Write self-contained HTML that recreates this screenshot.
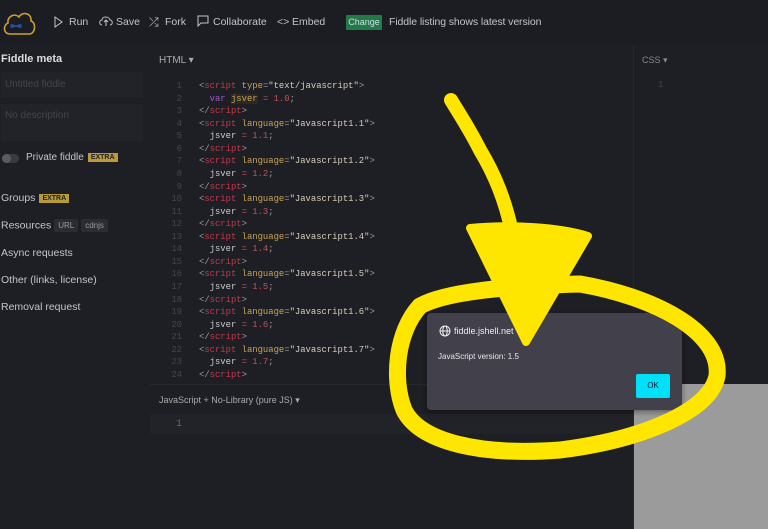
<!DOCTYPE html>
<html><head><style>
*{margin:0;padding:0;box-sizing:border-box}
body{width:768px;height:529px;overflow:hidden;background:#1e1f24;font-family:"Liberation Sans",sans-serif;position:relative;color:#c8c8cc}
.top{position:absolute;left:0;top:0;width:768px;height:45px;background:#1c1d22}
.nav{position:absolute;top:16px;font-size:10.5px;color:#c4c4c8}
.side{position:absolute;left:0;top:45px;width:150px;height:484px;background:#1e1f24}
.ed{position:absolute;left:150px;top:45px;width:483px;height:484px;background:#1e1f24}
.css{position:absolute;left:633px;top:45px;width:135px;height:484px;background:#1e1f24;border-left:1px solid #26272c}
.code{position:absolute;left:150px;top:80px;font-family:"Liberation Mono",monospace;font-size:8.9px;line-height:12.57px;white-space:pre}
.ln{display:inline-block;width:32px;text-align:right;color:#45464d;margin-right:17px}
.b{color:#9a9aa0}.t{color:#c5384a}.a{color:#c9a255}.s{color:#d7cfb6}.n{color:#c2505a}.k{color:#a05ac8}.p{color:#c2505a}.v{color:#c9c9cc}
.badge{display:inline-block;background:#b89a3c;color:#222;font-size:7px;padding:1px 3px;margin-left:4px;vertical-align:middle;font-weight:bold}
.tag{display:inline-block;background:#2c2d33;color:#9a9aa0;font-size:8px;padding:2px 4px;margin-left:3px;vertical-align:middle;border-radius:2px}
.si{position:absolute;left:1px;font-size:10.5px;color:#c4c4c8}
</style></head><body>
<div class="top"></div>
<svg style="position:absolute;left:2px;top:9px" width="34" height="28" viewBox="0 0 34 28"><path d="M8 25 C1 25 1 16 6 14 C5 7 13 4 17 8 C20 2 30 4 29 12 C34 13 34 25 27 25 Z" fill="none" stroke="#c9a227" stroke-width="1.6"/><path d="M12 17 c-4 -4 -4 4 0 0 l4 0 c4 4 4 -4 0 0" fill="none" stroke="#1e5aa8" stroke-width="1.6"/></svg>
<svg style="position:absolute;left:53px;top:16px" width="10" height="12"><path d="M2 1 L9 6 L2 11 Z" fill="none" stroke="#c4c4c8"/></svg>
<div class="nav" style="left:69px">Run</div>
<svg style="position:absolute;left:99px;top:15px" width="14" height="12"><path d="M3 10 C0 10 0 5 3 5 C3 1 10 1 11 5 C14 5 14 10 11 10 M7 11 V5 M5 7 L7 5 L9 7" fill="none" stroke="#c4c4c8"/></svg>
<div class="nav" style="left:116px">Save</div>
<div class="nav" style="left:149px;font-size:12px;top:15px">⤮</div>
<div class="nav" style="left:165px">Fork</div>
<svg style="position:absolute;left:197px;top:15px" width="12" height="12"><path d="M1 1 H11 V8 H4 L1 11 Z" fill="none" stroke="#c4c4c8"/></svg>
<div class="nav" style="left:213px">Collaborate</div>
<div class="nav" style="left:277px">&lt;&gt;</div>
<div class="nav" style="left:292px">Embed</div>
<div style="position:absolute;left:346px;top:15px;width:36px;height:15px;background:#247a46;color:#cde;font-size:9px;text-align:center;line-height:15px;border-radius:1px">Change</div>
<div class="nav" style="left:389px;letter-spacing:-0.1px">Fiddle listing shows latest version</div>

<div class="side"></div>
<div style="position:absolute;left:1px;top:53px;font-size:11px;font-weight:bold;color:#ddd">Fiddle meta</div>
<div style="position:absolute;left:1px;top:72px;width:142px;height:25px;background:#222328;color:#44454c;font-size:10px;padding:7px 4px">Untitled fiddle</div>
<div style="position:absolute;left:1px;top:104px;width:142px;height:37px;background:#222328;color:#44454c;font-size:10px;padding:6px 4px">No description</div>
<div style="position:absolute;left:2px;top:154px;width:17px;height:9px;border-radius:5px;background:#3a3b40"></div>
<div style="position:absolute;left:2px;top:154px;width:9px;height:9px;border-radius:5px;background:#5a5b60"></div>
<div class="si" style="left:26px;top:152px;font-size:10px">Private fiddle<span class="badge">EXTRA</span></div>
<div class="si" style="top:192px">Groups<span class="badge">EXTRA</span></div>
<div class="si" style="top:219px">Resources<span class="tag">URL</span><span class="tag">cdnjs</span></div>
<div class="si" style="top:247px">Async requests</div>
<div class="si" style="top:274px">Other (links, license)</div>
<div class="si" style="top:301px">Removal request</div>

<div class="ed"></div>
<div style="position:absolute;left:159px;top:55px;font-size:10px;color:#aaa">HTML ▾</div>
<div class="code"><span class="ln">1</span><span class="b">&lt;</span><span class="t">script</span> <span class="a">type</span><span class="b">=</span><span class="s">"text/javascript"</span><span class="b">&gt;</span>
<span class="ln">2</span>  <span class="k">var</span> <span class="a" style="background:#2a2a24">jsver</span> <span class="p">=</span> <span class="n">1.0</span><span class="b">;</span>
<span class="ln">3</span><span class="b">&lt;/</span><span class="t">script</span><span class="b">&gt;</span>
<span class="ln">4</span><span class="b">&lt;</span><span class="t">script</span> <span class="a">language</span><span class="b">=</span><span class="s">"Javascript1.1"</span><span class="b">&gt;</span>
<span class="ln">5</span>  <span class="v">jsver</span> <span class="p">=</span> <span class="n">1.1</span><span class="b">;</span>
<span class="ln">6</span><span class="b">&lt;/</span><span class="t">script</span><span class="b">&gt;</span>
<span class="ln">7</span><span class="b">&lt;</span><span class="t">script</span> <span class="a">language</span><span class="b">=</span><span class="s">"Javascript1.2"</span><span class="b">&gt;</span>
<span class="ln">8</span>  <span class="v">jsver</span> <span class="p">=</span> <span class="n">1.2</span><span class="b">;</span>
<span class="ln">9</span><span class="b">&lt;/</span><span class="t">script</span><span class="b">&gt;</span>
<span class="ln">10</span><span class="b">&lt;</span><span class="t">script</span> <span class="a">language</span><span class="b">=</span><span class="s">"Javascript1.3"</span><span class="b">&gt;</span>
<span class="ln">11</span>  <span class="v">jsver</span> <span class="p">=</span> <span class="n">1.3</span><span class="b">;</span>
<span class="ln">12</span><span class="b">&lt;/</span><span class="t">script</span><span class="b">&gt;</span>
<span class="ln">13</span><span class="b">&lt;</span><span class="t">script</span> <span class="a">language</span><span class="b">=</span><span class="s">"Javascript1.4"</span><span class="b">&gt;</span>
<span class="ln">14</span>  <span class="v">jsver</span> <span class="p">=</span> <span class="n">1.4</span><span class="b">;</span>
<span class="ln">15</span><span class="b">&lt;/</span><span class="t">script</span><span class="b">&gt;</span>
<span class="ln">16</span><span class="b">&lt;</span><span class="t">script</span> <span class="a">language</span><span class="b">=</span><span class="s">"Javascript1.5"</span><span class="b">&gt;</span>
<span class="ln">17</span>  <span class="v">jsver</span> <span class="p">=</span> <span class="n">1.5</span><span class="b">;</span>
<span class="ln">18</span><span class="b">&lt;/</span><span class="t">script</span><span class="b">&gt;</span>
<span class="ln">19</span><span class="b">&lt;</span><span class="t">script</span> <span class="a">language</span><span class="b">=</span><span class="s">"Javascript1.6"</span><span class="b">&gt;</span>
<span class="ln">20</span>  <span class="v">jsver</span> <span class="p">=</span> <span class="n">1.6</span><span class="b">;</span>
<span class="ln">21</span><span class="b">&lt;/</span><span class="t">script</span><span class="b">&gt;</span>
<span class="ln">22</span><span class="b">&lt;</span><span class="t">script</span> <span class="a">language</span><span class="b">=</span><span class="s">"Javascript1.7"</span><span class="b">&gt;</span>
<span class="ln">23</span>  <span class="v">jsver</span> <span class="p">=</span> <span class="n">1.7</span><span class="b">;</span>
<span class="ln">24</span><span class="b">&lt;/</span><span class="t">script</span><span class="b">&gt;</span></div>
<div style="position:absolute;left:150px;top:384px;width:483px;height:145px;background:#1e1f24;border-top:1px solid #26272c"></div>
<div style="position:absolute;left:159px;top:395px;font-size:9px;color:#aaa">JavaScript + No-Library (pure JS) ▾</div>
<div style="position:absolute;left:150px;top:414px;width:483px;height:20px;background:#222328"></div>
<div style="position:absolute;left:176px;top:419px;font-family:'Liberation Mono',monospace;font-size:10px;color:#666">1</div>

<div class="css"></div>
<div style="position:absolute;left:642px;top:55px;font-size:9px;color:#888">CSS ▾</div>
<div style="position:absolute;left:658px;top:80px;font-family:'Liberation Mono',monospace;font-size:9px;color:#45464d">1</div>
<div style="position:absolute;left:634px;top:384px;width:134px;height:145px;background:#9b9b9b"></div>

<div style="position:absolute;left:427px;top:313px;width:255px;height:97px;background:#42404b;border-radius:4px;box-shadow:0 2px 6px rgba(0,0,0,.4)"></div>
<svg style="position:absolute;left:439px;top:325px" width="12" height="12" viewBox="0 0 12 12"><circle cx="6" cy="6" r="5" fill="none" stroke="#eee"/><ellipse cx="6" cy="6" rx="2.2" ry="5" fill="none" stroke="#eee"/><path d="M1 6H11" stroke="#eee"/></svg>
<div style="position:absolute;left:454px;top:326px;font-size:9px;color:#eee">fiddle.jshell.net</div>
<div style="position:absolute;left:438px;top:352px;font-size:8px;color:#e6e6e6">JavaScript version: 1.5</div>
<div style="position:absolute;left:636px;top:374px;width:34px;height:24px;background:#00e0f8;border-radius:2px;color:#113;font-size:8px;text-align:center;line-height:24px">OK</div>

<svg style="position:absolute;left:0;top:0" width="768" height="529">
<g fill="none" stroke="#ffe600" stroke-linecap="round" stroke-linejoin="round">
<path d="M451 100 C460 115 470 130 480 150 C495 175 505 200 512 232" stroke-width="14"/>
<path d="M580 284 C650 296 722 330 717 376 C710 412 640 440 560 450 C480 456 420 442 404 410 C392 380 396 332 420 306 C445 292 505 286 580 284" stroke-width="17"/>
</g>
<path d="M470 228 C510 224 560 227 588 236 L526 342 Z" fill="#ffe600" stroke="#ffe600" stroke-width="8" stroke-linejoin="round"/>
</svg>
</body></html>
